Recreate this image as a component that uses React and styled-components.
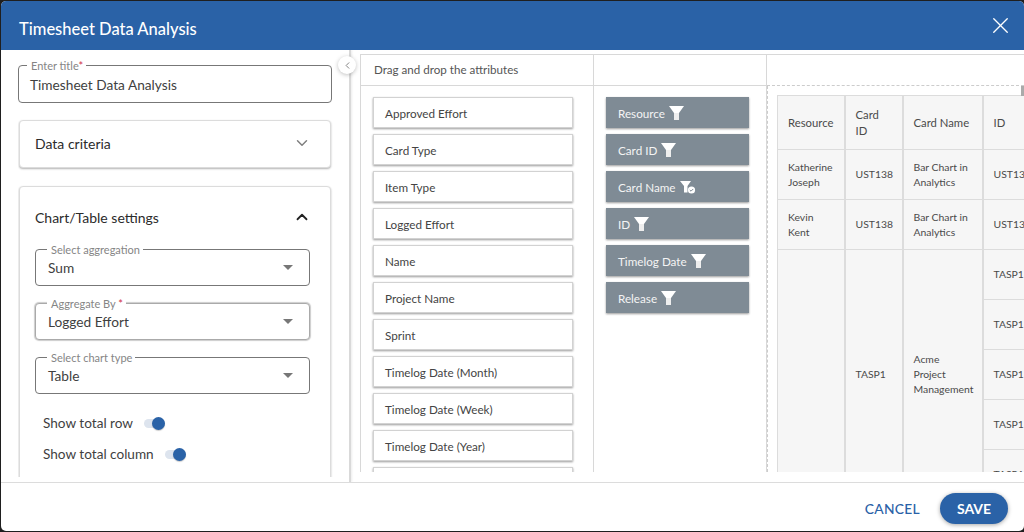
import React from "react";
import styled, { createGlobalStyle } from "styled-components";
import { X, ChevronDown, ChevronUp, ChevronLeft } from "lucide-react";

const Global = createGlobalStyle`
  html, body { margin: 0; padding: 0; background: #1f1f1f; }
  * { box-sizing: border-box; }
  body { font-family: Lato, "Open Sans", sans-serif; overflow: hidden; }
`;

const Dialog = styled.div`
  position: relative;
  margin: 1px 0 1px 1px;
  height: 530px;
  width: 1023px;
  background: #fff;
  border-radius: 5px;
  display: flex;
  flex-direction: column;
  overflow: hidden;
`;
const Header = styled.header`
  height: 49px;
  flex: none;
  background: #2a62a7;
  color: #fff;
  display: flex;
  align-items: center;
  justify-content: space-between;
  padding: 0 10px 0 18px;
`;
const Title = styled.h1`
  margin: 6px 0 0;
  font-size: 16.5px;
  font-weight: 500;
`;
const CloseButton = styled.span`
  display: flex;
  color: #fff;
`;
const Body = styled.div`
  flex: 1;
  min-height: 0;
  display: flex;
  overflow: hidden;
`;
const Sidebar = styled.aside`
  position: relative;
  width: 350px;
  flex: none;
  padding: 7px 18px 0 17px;
  border-right: 2px solid #d9d9d9;
  box-shadow: 1px 0 2px rgba(0, 0, 0, 0.08);
`;
const SidebarClip = styled.div`
  height: 420px;
  overflow: hidden;
  padding: 8px 2px 0 0;
  margin-right: -2px;
`;
const Collapse = styled.span`
  position: absolute;
  top: 6px;
  right: -7px;
  width: 18px;
  height: 18px;
  border-radius: 50%;
  background: #fff;
  color: #777;
  box-shadow: 0 1px 4px rgba(0, 0, 0, 0.25);
  display: flex;
  align-items: center;
  justify-content: center;
  z-index: 2;
`;
const Field = styled.div`
  position: relative;
  height: ${(p) => p.$h || 37}px;
  width: ${(p) => (p.$w ? p.$w + "px" : "auto")};
  border: ${(p) => (p.$thick ? "1px solid #aaa" : "1px solid #777")};
  box-shadow: ${(p) => (p.$thick ? "0 0 1px 1px #ccc" : "none")};
  border-radius: 4px;
  display: flex;
  align-items: center;
  justify-content: space-between;
  padding: ${(p) => p.$pad || "0 16px 0 12px"};
  font-size: 13.7px;
  color: #3f3f3f;
  background: #fff;
`;
const Legend = styled.span`
  position: absolute;
  top: -7px;
  left: ${(p) => p.$left || 11}px;
  padding: 0 3px 0 4px;
  background: #fff;
  font-size: 11px;
  line-height: 13px;
  color: #858585;
  white-space: nowrap;
`;
const Required = styled.span`
  color: #d0304a;
`;
const Arrow = styled.i`
  width: 0;
  height: 0;
  border-left: 5px solid transparent;
  border-right: 5px solid transparent;
  border-top: 5px solid #777;
`;
const Card = styled.section`
  width: 312px;
  margin-left: 1px;
  border: 1px solid #dcdcdc;
  border-radius: 4px;
  box-shadow: 0 1px 2px rgba(0, 0, 0, 0.3);
  background: #fff;
  margin-top: ${(p) => p.$top}px;
  padding: ${(p) => p.$pad};
`;
const CardHead = styled.div`
  display: flex;
  align-items: center;
  justify-content: space-between;
  font-size: 14px;
  height: 20px;
  color: #2b2b2b;
`;
const CardHeadIcon = styled.span`
  display: flex;
  margin-right: 19px;
  color: ${(p) => (p.$strong ? "#222" : "#808080")};
`;
const SelectStack = styled.div`
  display: flex;
  flex-direction: column;
  gap: 17px;
  margin-top: 22px;
  width: 275px;
`;
const Toggles = styled.div`
  display: flex;
  flex-direction: column;
  gap: 13px;
  margin: 20px 0 0 8px;
`;
const ToggleRow = styled.div`
  display: flex;
  align-items: center;
  gap: 11px;
  font-size: 13.6px;
  color: #3f3f3f;
  height: 18px;
`;
const Track = styled.span`
  position: relative;
  width: 21px;
  height: 9px;
  border-radius: 5px;
  background: #dde4ee;
`;
const Thumb = styled.span`
  position: absolute;
  top: -2px;
  right: 0;
  width: 13px;
  height: 13px;
  border-radius: 50%;
  background: #2a62a7;
  box-shadow: 0 1px 1px rgba(0, 0, 0, 0.2);
`;
const Main = styled.main`
  flex: 1;
  min-width: 0;
  padding: 4px 0 10px 9px;
`;
const Board = styled.div`
  height: 418px;
  overflow: hidden;
  border-top: 1px solid #d8d8d8;
  border-left: 1px solid #d8d8d8;
  display: grid;
  grid-template-columns: 233px 173px 1fr;
  grid-template-rows: 31px 1fr;
`;
const HeadCell = styled.div`
  border-right: ${(p) => (p.$last ? "none" : "1px solid #d8d8d8")};
  border-bottom: ${(p) => (p.$last ? "1px dashed #ccc" : "1px solid #d8d8d8")};
  font-size: 11.6px;
  color: #555;
  padding: 8px 13px;
`;
const ListCell = styled.div`
  border-right: 1px solid #d8d8d8;
  padding: ${(p) => p.$pad};
  display: flex;
  flex-direction: column;
  gap: 6px;
  overflow: hidden;
`;
const Attr = styled.div`
  height: 31px;
  flex: none;
  width: ${(p) => (p.$w ? p.$w + "px" : "100%")};
  background: ${(p) => (p.$active ? "#7f8b95" : "#fff")};
  border: 1px solid ${(p) => (p.$active ? "#7f8b95" : "#d2d2d2")};
  box-shadow: 0 1px 2px rgba(0, 0, 0, 0.4);
  color: ${(p) => (p.$active ? "#f4f4f4" : "#444")};
  font-size: 11.7px;
  padding: 0 11px;
  display: flex;
  align-items: center;
  gap: 4px;
`;
const TableCell = styled.div`
  position: relative;
  border-left: 1px dashed #ccc;
  padding: 9px 0 0 9px;
  overflow: hidden;
`;
const ScrollThumb = styled.span`
  position: absolute;
  top: 0;
  right: 0;
  width: 3px;
  height: 10px;
  background: #aaa;
`;
const Table = styled.table`
  border-collapse: collapse;
  table-layout: fixed;
  width: 320px;
  background: #f6f6f6;
  font-size: 10.4px;
  line-height: 15px;
  color: #4a4a4a;
`;
const Th = styled.th`
  border: 1px solid #dcdcdc;
  border-width: 1px 2px 1px 1px;
  font-weight: 400;
  font-size: 11.3px;
  line-height: 16px;
  text-align: left;
  padding: 0 10px;
  height: 54px;
`;
const Td = styled.td`
  border: 1px solid #dcdcdc;
  border-right-width: 2px;
  padding: 0 10px;
  height: 50px;
  text-align: left;
  vertical-align: middle;
`;
const Footer = styled.footer`
  height: 49px;
  flex: none;
  border-top: 1px solid #dcdcdc;
  display: flex;
  align-items: center;
  justify-content: flex-end;
  gap: 20px;
  padding: 3px 16px 0 0;
`;
const Cancel = styled.button`
  border: 0;
  background: none;
  padding: 0;
  font: 500 13.8px Lato, sans-serif;
  color: #2a62a7;
  letter-spacing: 0.3px;
`;
const Save = styled.button`
  border: 0;
  width: 68px;
  height: 31px;
  border-radius: 16px;
  background: #2a62a7;
  color: #fff;
  font: 700 14px Lato, sans-serif;
  box-shadow: 0 1px 4px rgba(0, 0, 0, 0.35);
`;

const Funnel = ({ check }) =>
  check ? (
    <svg width="16" height="14" viewBox="0 0 16 14">
      <path d="M0 1h11L7.5 6v6.5H4V6z" fill="#fff" />
      <circle cx="11.5" cy="10" r="3.6" fill="#fff" />
      <path d="M9.8 10l1.2 1.2 2.2-2.2" stroke="#7f8b95" strokeWidth="1" fill="none" />
    </svg>
  ) : (
    <svg width="15" height="14" viewBox="0 0 15 14">
      <path d="M0 0h15L10 7H5z" fill="#fff" />
      <path d="M5 7h5v7H5z" fill="#eee" />
    </svg>
  );

const attrs = [
  "Approved Effort", "Card Type", "Item Type", "Logged Effort", "Name", "Project Name",
  "Sprint", "Timelog Date (Month)", "Timelog Date (Week)", "Timelog Date (Year)", "",
];
const chosen = [
  ["Resource"], ["Card ID"], ["Card Name", true], ["ID"], ["Timelog Date"], ["Release"],
];

export default function App() {
  return (
    <Dialog>
      <Global />
      <Header>
        <Title>Timesheet Data Analysis</Title>
        <CloseButton><X size={27} strokeWidth={1.2} /></CloseButton>
      </Header>
      <Body>
        <Sidebar>
          <Collapse><ChevronLeft size={11} strokeWidth={2} /></Collapse>
          <SidebarClip>
            <Field $h={38} $w={314} $pad="1px 14px 0 11px">
              <Legend $left={8}>Enter title<Required>*</Required></Legend>
              Timesheet Data Analysis
            </Field>
            <Card $top={17} $pad="12px 0 14px 15px">
              <CardHead>
                Data criteria
                <CardHeadIcon><ChevronDown size={18} /></CardHeadIcon>
              </CardHead>
            </Card>
            <Card $top={18} $pad="20px 0 60px 15px">
              <CardHead>
                Chart/Table settings
                <CardHeadIcon $strong><ChevronUp size={18} strokeWidth={2.4} /></CardHeadIcon>
              </CardHead>
              <SelectStack>
                <Field>
                  <Legend>Select aggregation</Legend>
                  Sum<Arrow />
                </Field>
                <Field $thick>
                  <Legend>Aggregate By <Required>*</Required></Legend>
                  Logged Effort<Arrow />
                </Field>
                <Field>
                  <Legend>Select chart type</Legend>
                  Table<Arrow />
                </Field>
              </SelectStack>
              <Toggles>
                <ToggleRow>Show total row<Track><Thumb /></Track></ToggleRow>
                <ToggleRow>Show total column<Track><Thumb /></Track></ToggleRow>
              </Toggles>
            </Card>
          </SidebarClip>
        </Sidebar>
        <Main>
          <Board>
            <HeadCell>Drag and drop the attributes</HeadCell>
            <HeadCell />
            <HeadCell $last />
            <ListCell $pad="11px 20px 0 12px">
              {attrs.map((a, i) => <Attr key={i}>{a}</Attr>)}
            </ListCell>
            <ListCell $pad="11px 0 0 12px">
              {chosen.map(([n, c]) => (
                <Attr key={n} $active $w={143}>{n}<Funnel check={c} /></Attr>
              ))}
            </ListCell>
            <TableCell>
              <ScrollThumb />
              <Table>
                <colgroup>
                  <col width="67" /><col width="58" /><col width="80" /><col width="115" />
                </colgroup>
                <tbody>
                  <tr>
                    <Th>Resource</Th><Th>Card<br />ID</Th><Th>Card Name</Th><Th>ID</Th>
                  </tr>
                  <tr>
                    <Td>Katherine Joseph</Td><Td>UST138</Td><Td>Bar Chart in Analytics</Td><Td>UST138</Td>
                  </tr>
                  <tr>
                    <Td>Kevin Kent</Td><Td>UST138</Td><Td>Bar Chart in Analytics</Td><Td>UST138</Td>
                  </tr>
                  <tr>
                    <Td rowSpan={5} /><Td rowSpan={5}>TASP1</Td>
                    <Td rowSpan={5}>Acme Project Management</Td><Td>TASP1</Td>
                  </tr>
                  <tr><Td>TASP1</Td></tr>
                  <tr><Td>TASP1</Td></tr>
                  <tr><Td>TASP1</Td></tr>
                  <tr><Td>TASP1</Td></tr>
                </tbody>
              </Table>
            </TableCell>
          </Board>
        </Main>
      </Body>
      <Footer>
        <Cancel>CANCEL</Cancel>
        <Save>SAVE</Save>
      </Footer>
    </Dialog>
  );
}
